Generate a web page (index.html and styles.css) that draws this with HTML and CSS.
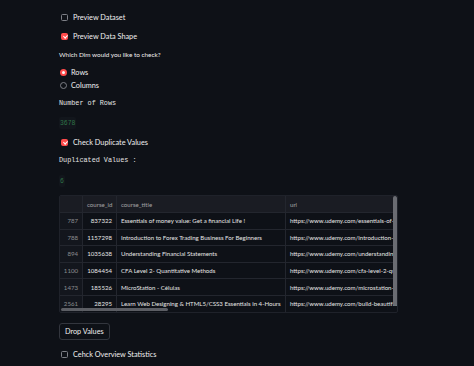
FILE: index.html
```html
<!DOCTYPE html>
<html lang="en">
<head>
    <meta charset="UTF-8">
    <meta name="viewport" content="width=device-width, initial-scale=1.0">
    <title>Data Explorer</title>
    <link rel="stylesheet" href="styles.css">
</head>
<body>
    <div class="main">
        <label class="check row-1"><span class="box"></span>Preview Dataset</label>
        <label class="check row-2"><span class="box on"></span>Preview Data Shape</label>

        <p class="widget-label">Which Dim would you like to check?</p>
        <div class="radio-group">
            <label class="radio"><span class="dot on"></span>Rows</label>
            <label class="radio"><span class="dot"></span>Columns</label>
        </div>

        <pre class="mono mono-1">Number of Rows</pre>
        <div class="code code-1"><code>3678</code></div>

        <label class="check row-3"><span class="box on"></span>Check Duplicate Values</label>
        <pre class="mono mono-2">Duplicated Values :</pre>
        <div class="code code-2"><code>6</code></div>

        <div class="grid-wrap">
            <div class="grid">
                <div class="head">
                    <span class="c idx"></span>
                    <span class="c num">course_id</span>
                    <span class="c title">course_title</span>
                    <span class="c url">url</span>
                </div>
                <div class="tr">
                    <span class="c idx">787</span>
                    <span class="c num">837322</span>
                    <span class="c title">Essentials of money value: Get a financial Life !</span>
                    <span class="c url">https://www.udemy.com/essentials-of-money-value/</span>
                </div>
                <div class="tr">
                    <span class="c idx">788</span>
                    <span class="c num">1157298</span>
                    <span class="c title">Introduction to Forex Trading Business For Beginners</span>
                    <span class="c url">https://www.udemy.com/introduction-to-forex-trading/</span>
                </div>
                <div class="tr">
                    <span class="c idx">894</span>
                    <span class="c num">1035638</span>
                    <span class="c title">Understanding Financial Statements</span>
                    <span class="c url">https://www.udemy.com/understanding-financial-statements/</span>
                </div>
                <div class="tr">
                    <span class="c idx">1100</span>
                    <span class="c num">1084454</span>
                    <span class="c title">CFA Level 2- Quantitative Methods</span>
                    <span class="c url">https://www.udemy.com/cfa-level-2-quantitative-methods/</span>
                </div>
                <div class="tr">
                    <span class="c idx">1473</span>
                    <span class="c num">185526</span>
                    <span class="c title">MicroStation - Células</span>
                    <span class="c url">https://www.udemy.com/microstation-celulas/</span>
                </div>
                <div class="tr">
                    <span class="c idx">2561</span>
                    <span class="c num">28295</span>
                    <span class="c title">Learn Web Designing &amp; HTML5/CSS3 Essentials in 4-Hours</span>
                    <span class="c url">https://www.udemy.com/build-beautiful-html5-website/</span>
                </div>
            </div>
            <div class="vscroll"></div>
            <div class="hscroll"></div>
        </div>

        <button class="btn">Drop Values</button>

        <label class="check row-4"><span class="box"></span>Cehck Overview Statistics</label>
    </div>
</body>
</html>
```

FILE: styles.css
```css
* { box-sizing: border-box; margin: 0; padding: 0; }
body {
    background-color: #0e1117;
    color: #fafafa;
    font-family: Lato, 'Noto Sans', sans-serif;
    width: 474px;
    height: 366px;
    overflow: hidden;
}
.main {
    padding: 11px 0 0 59px;
    display: flex;
    flex-direction: column;
    align-items: flex-start;
}

/* checkboxes */
.check {
    display: flex;
    align-items: center;
    height: 12px;
    font-size: 7.3px;
    color: #f0f0f0;
}
.row-2 { margin-top: 7px; }
.row-3 { margin-top: 7px; }
.row-4 { margin-top: 8px; }
.box {
    width: 7px;
    height: 7px;
    margin: 0 5px 0 2px;
    border: 1px solid #7d7f86;
    border-radius: 1.5px;
    position: relative;
}
.box.on {
    background-color: #ff4b4b;
    border-color: #ff4b4b;
}
.box.on::after {
    content: "";
    position: absolute;
    left: 1.6px;
    top: 0.2px;
    width: 1.6px;
    height: 3.2px;
    border: solid #ffffff;
    border-width: 0 1px 1px 0;
    transform: rotate(45deg);
}

/* radio */
.widget-label {
    margin-top: 8px;
    height: 10px;
    line-height: 10px;
    font-size: 6.4px;
    color: #f0f0f0;
}
.radio-group {
    margin-top: 6px;
    display: flex;
    flex-direction: column;
    gap: 1px;
}
.radio {
    display: flex;
    align-items: center;
    height: 12px;
    font-size: 7.3px;
    color: #f0f0f0;
}
.dot {
    width: 7px;
    height: 7px;
    margin: 0 4px 0 1px;
    border: 1px solid #7d7f86;
    border-radius: 50%;
}
.dot.on {
    border: 2px solid #ff4b4b;
    background-color: #fafafa;
}

/* monospaced output */
.mono {
    font-family: 'Liberation Mono', 'DejaVu Sans Mono', monospace;
    font-size: 6.8px;
    height: 10px;
    line-height: 10px;
    color: #e4e4e4;
    margin-top: 7px;
}
.code {
    height: 12px;
    display: flex;
    align-items: center;
    padding: 0 1px;
    margin-top: 9px;
    background-color: #12161c;
    border-radius: 2px;
}
.code-2 { margin-top: 10px; }
.code code {
    font-family: 'Liberation Mono', 'DejaVu Sans Mono', monospace;
    font-size: 6.4px;
    color: #2f7447;
}

/* dataframe */
.grid-wrap {
    position: relative;
    margin-top: 8px;
    width: 339px;
    height: 118px;
    overflow: hidden;
    border: 1px solid #1f222a;
    border-radius: 2px;
}
.grid {
    font-size: 6.1px;
    width: 420px;
}
.head, .tr {
    display: flex;
    border-bottom: 1px solid #23262e;
}
.head {
    height: 17px;
    background-color: #1a1c23;
    color: rgba(250, 250, 250, 0.6);
}
.tr {
    height: 16.6px;
    color: #e6e6e6;
}
.c {
    display: flex;
    align-items: center;
    padding: 0 4px;
    white-space: nowrap;
    overflow: hidden;
    border-right: 1px solid #23262e;
}
.idx {
    width: 23px;
    justify-content: flex-end;
    color: rgba(250, 250, 250, 0.5);
    background-color: #13161d;
}
.head .idx { background-color: #1a1c23; }
.num { width: 34px; justify-content: flex-end; }
.head .num { justify-content: flex-start; }
.title { width: 169px; }
.url { width: 190px; }
.vscroll {
    position: absolute;
    top: 0;
    right: 0;
    width: 4px;
    height: 110px;
    background-color: #6a6c72;
    border-radius: 2px;
}
.hscroll {
    position: absolute;
    left: 1px;
    bottom: 1px;
    width: 107px;
    height: 3px;
    background-color: #5c5e64;
    border-radius: 2px;
}

/* button */
.btn {
    margin-top: 10px;
    height: 17px;
    padding: 0 5px;
    font-family: Lato, 'Noto Sans', sans-serif;
    font-size: 7.3px;
    color: #f0f0f0;
    background-color: #0e1117;
    border: 1px solid #33363e;
    border-radius: 3px;
}
```
